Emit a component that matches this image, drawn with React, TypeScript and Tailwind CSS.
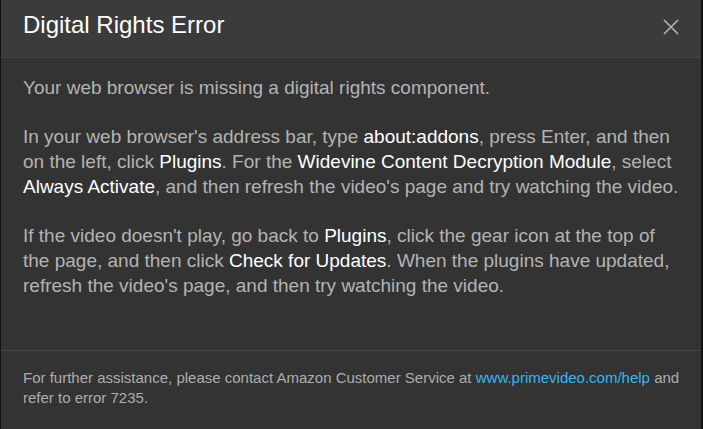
const W = ({ children }: { children: React.ReactNode }) => (
  <span className="text-white">{children}</span>
);

export default function App() {
  return (
    <div
      className="h-[429px] w-[703px] overflow-hidden bg-[#111] pl-px pr-[2px]"
      style={{ fontFamily: '"Liberation Sans", Arial, sans-serif' }}
    >
      <div className="flex h-full flex-col bg-[#333333]">
        {/* Header */}
        <div className="flex h-[58px] items-start justify-between border-b border-[#454545] bg-[#3b3b3b] pl-[22px] pr-[22px]">
          <h1 className="pt-[11px] text-[24px] leading-[28px] text-white">Digital Rights Error</h1>
          <button className="mt-[19px] text-[#b0b0b0]">
            <svg width="16" height="16" viewBox="0 0 16 16" fill="none" stroke="currentColor" strokeWidth="1.7">
              <path d="M1 1 L15 15 M15 1 L1 15" />
            </svg>
          </button>
        </div>

        {/* Body */}
        <div className="flex-1 px-[22px] pt-[17px] text-[19px] leading-[25px] text-[#b3b3b3]">
          <p>Your web browser is missing a digital rights component.</p>
          <p className="mt-[24px]">
            In your web browser's address bar, type <W>about:addons</W>, press Enter, and then on the
            left, click <W>Plugins</W>. For the <W>Widevine Content Decryption Module</W>, select{' '}
            <W>Always Activate</W>, and then refresh the video's page and try watching the video.
          </p>
          <p className="mt-[24px]">
            If the video doesn't play, go back to <W>Plugins</W>, click the gear icon at the top of the
            page, and then click <W>Check for Updates</W>. When the plugins have updated, refresh the
            video's page, and then try watching the video.
          </p>
        </div>

        {/* Footer */}
        <div className="h-[79px] border-t border-[#454545] pl-[22px] pr-[14px] pt-[17px] text-[15px] leading-[20px] text-[#adadad]">
          For further assistance, please contact Amazon Customer Service at{' '}
          <a className="text-[#3db4ec]">www.primevideo.com/help</a> and refer to error 7235.
        </div>
      </div>
    </div>
  );
}
